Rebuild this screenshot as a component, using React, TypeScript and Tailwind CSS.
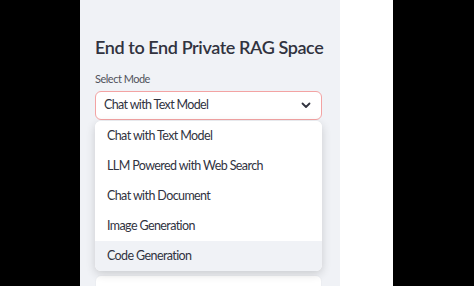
import React from "react";

const items = [
  "Chat with Text Model",
  "LLM Powered with Web Search",
  "Chat with Document",
  "Image Generation",
  "Code Generation",
];

export default function App() {
  return (
    <div
      className="flex w-[474px] h-[286px] overflow-hidden bg-black"
      style={{ fontFamily: '"Lato", "Noto Sans", sans-serif' }}
    >
      <div className="w-[80px] shrink-0 bg-black" />
      <div className="relative w-[260px] shrink-0 bg-[#f0f2f6] pl-[15px] pr-[18px] pt-[35px]">
        <h1 className="whitespace-nowrap text-[18px] leading-[24px] font-semibold tracking-[-0.4px] text-[#31333f]">
          End to End Private RAG Space
        </h1>
        <div className="mt-[13px] text-[11px] leading-[14px] tracking-[-0.5px] text-[#50525c]">Select Mode</div>
        <div className="relative mt-[5px]">
          <div className="flex h-[29px] items-center justify-between rounded-[6px] border border-[#f3a3a3] bg-white pl-[8px] pr-[10px]">
            <span className="text-[12.5px] tracking-[-0.65px] text-[#31333f]">Chat with Text Model</span>
            <svg width="10" height="7" viewBox="0 0 10 7" fill="none">
              <path d="M1.5 1.5 L5 5 L8.5 1.5" stroke="#31333f" strokeWidth="1.8" strokeLinecap="round" strokeLinejoin="round" />
            </svg>
          </div>
          <div className="absolute left-0 right-0 top-[30px] z-10 rounded-[6px] bg-white shadow-[0_3px_10px_rgba(0,0,0,0.16)] overflow-hidden">
            {items.map((t, i) => (
              <div
                key={t}
                className={`flex h-[30px] items-center pl-[12px] text-[12.5px] tracking-[-0.6px] text-[#31333f] ${i === 4 ? "bg-[#f0f2f6]" : "bg-white"}`}
              >
                {t}
              </div>
            ))}
          </div>
          <div className="mt-[155px] h-[30px] rounded-[6px] border border-[#eceef2] bg-white" />
        </div>
      </div>
      <div className="w-[53px] shrink-0 bg-white" />
      <div className="flex-1 bg-black" />
    </div>
  );
}
